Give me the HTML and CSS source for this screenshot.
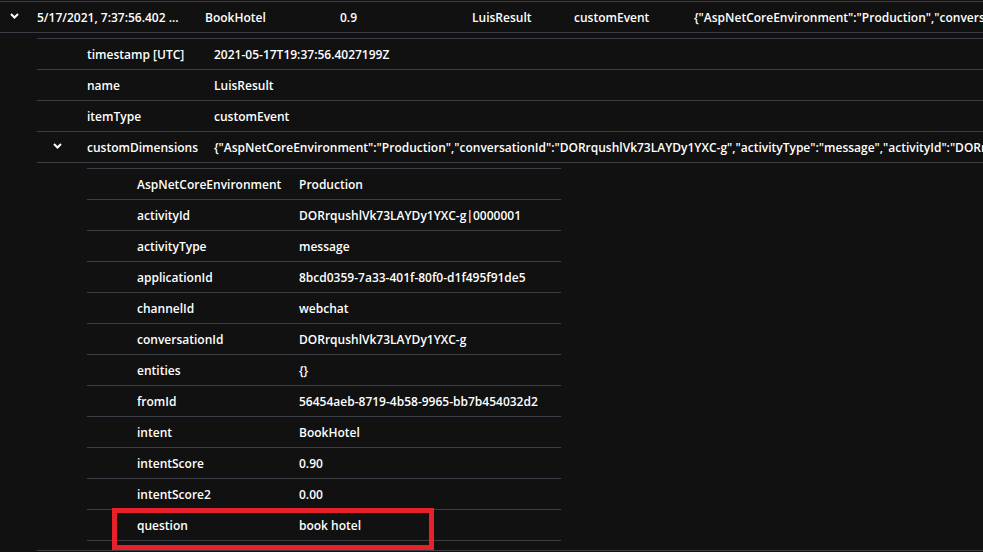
FILE: index.html
```html
<!DOCTYPE html>
<html lang="en">
<head>
    <meta charset="UTF-8">
    <title>Logs - customEvent</title>
    <link rel="stylesheet" href="styles.css">
</head>
<body>
    <div class="results">
        <!-- Result row -->
        <div class="result-row">
            <span class="chevron"><svg width="9" height="6" viewBox="0 0 9 6"><polyline points="1,1 4.5,4.5 8,1" /></svg></span>
            <span class="cell col-time">5/17/2021, 7:37:56.402 ...</span>
            <span class="cell col-name">BookHotel</span>
            <span class="cell col-score">0.9</span>
            <span class="cell col-event">LuisResult</span>
            <span class="cell col-type">customEvent</span>
            <span class="cell col-dims">{"AspNetCoreEnvironment":"Production","conversationId":"DORrqushlVk73LAYDy1YXC-g","activityType":"message","activityId":"DORrqushlVk73LAYDy1YXC-g|0000001"}</span>
        </div>

        <!-- Expanded details -->
        <div class="details">
            <div class="detail-row">
                <span class="toggle"></span>
                <span class="key">timestamp [UTC]</span>
                <span class="value">2021-05-17T19:37:56.4027199Z</span>
            </div>
            <div class="detail-row">
                <span class="toggle"></span>
                <span class="key">name</span>
                <span class="value">LuisResult</span>
            </div>
            <div class="detail-row">
                <span class="toggle"></span>
                <span class="key">itemType</span>
                <span class="value">customEvent</span>
            </div>
            <div class="detail-row">
                <span class="toggle"><svg width="9" height="6" viewBox="0 0 9 6"><polyline points="1,1 4.5,4.5 8,1" /></svg></span>
                <span class="key">customDimensions</span>
                <span class="value">{"AspNetCoreEnvironment":"Production","conversationId":"DORrqushlVk73LAYDy1YXC-g","activityType":"message","activityId":"DORrqushlVk73LAYDy1YXC-g|0000001"}</span>
            </div>

            <div class="dims-wrap">
                <div class="dims">
                    <div class="dim-row"><span class="dim-key">AspNetCoreEnvironment</span><span class="dim-value">Production</span></div>
                    <div class="dim-row"><span class="dim-key">activityId</span><span class="dim-value">DORrqushlVk73LAYDy1YXC-g|0000001</span></div>
                    <div class="dim-row"><span class="dim-key">activityType</span><span class="dim-value">message</span></div>
                    <div class="dim-row"><span class="dim-key">applicationId</span><span class="dim-value">8bcd0359-7a33-401f-80f0-d1f495f91de5</span></div>
                    <div class="dim-row"><span class="dim-key">channelId</span><span class="dim-value">webchat</span></div>
                    <div class="dim-row"><span class="dim-key">conversationId</span><span class="dim-value">DORrqushlVk73LAYDy1YXC-g</span></div>
                    <div class="dim-row"><span class="dim-key">entities</span><span class="dim-value">{}</span></div>
                    <div class="dim-row"><span class="dim-key">fromId</span><span class="dim-value">56454aeb-8719-4b58-9965-bb7b454032d2</span></div>
                    <div class="dim-row"><span class="dim-key">intent</span><span class="dim-value">BookHotel</span></div>
                    <div class="dim-row"><span class="dim-key">intentScore</span><span class="dim-value">0.90</span></div>
                    <div class="dim-row"><span class="dim-key">intentScore2</span><span class="dim-value">0.00</span></div>
                    <div class="dim-row highlight"><span class="dim-key">question</span><span class="dim-value">book hotel</span></div>
                </div>
            </div>
        </div>
    </div>
</body>
</html>
```

FILE: styles.css
```css
* {
    margin: 0;
    padding: 0;
    box-sizing: border-box;
}

body {
    background-color: #111111;
    color: #ffffff;
    font-family: 'Open Sans', 'Noto Sans', sans-serif;
    font-size: 12px;
    font-weight: 600;
    padding-top: 1px;
    overflow: hidden;
}

.results {
    width: 100%;
}

/* Result row */
.result-row {
    display: grid;
    grid-template-columns: 37px 168px 135px 132px 102px 120px 1fr;
    align-items: center;
    height: 32px;
    border-top: 1px solid #3b3e44;
    border-bottom: 1px solid #3b3e44;
    white-space: nowrap;
}

.cell {
    overflow: hidden;
}

.chevron,
.toggle {
    display: flex;
    align-items: center;
    justify-content: center;
}

.chevron {
    padding-right: 8px;
    padding-bottom: 2px;
}

.toggle {
    padding-right: 10px;
    padding-bottom: 2px;
}

.chevron svg polyline,
.toggle svg polyline {
    fill: none;
    stroke: #ffffff;
    stroke-width: 2;
}

/* Expanded details */
.details {
    margin-left: 37px;
    padding-top: 5px;
}

.detail-row {
    display: grid;
    grid-template-columns: 50px 127px 1fr;
    align-items: center;
    height: 31px;
    border-top: 1px solid #3b3e44;
    white-space: nowrap;
    overflow: hidden;
}

.value {
    overflow: hidden;
}

.dims-wrap {
    border-top: 1px solid #3b3e44;
    border-bottom: 1px solid #3b3e44;
    padding: 5px 0 9px 50px;
}

.dims {
    width: 474px;
    border-top: 1px solid #3b3e44;
}

.dim-row {
    position: relative;
    display: grid;
    grid-template-columns: 50px 162px 1fr;
    align-items: center;
    height: 31px;
    border-bottom: 1px solid #3b3e44;
    white-space: nowrap;
}

.dim-key {
    grid-column: 2;
}

.highlight::after {
    content: "";
    box-sizing: border-box;
    position: absolute;
    left: 25px;
    top: -2px;
    width: 322px;
    height: 42px;
    border: 5px solid #e8202a;
}
```
